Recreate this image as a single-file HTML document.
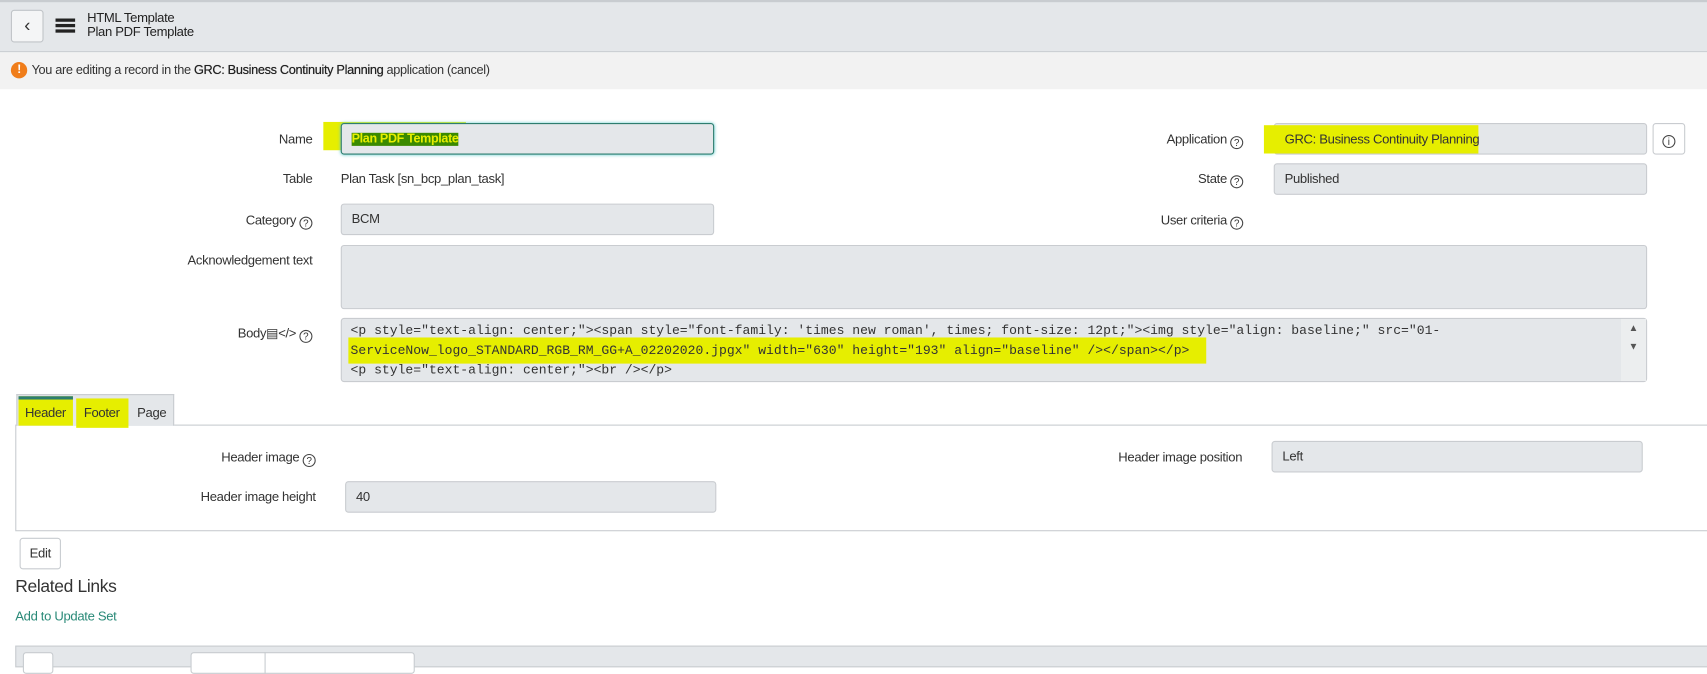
<!DOCTYPE html>
<html><head><style>
*{margin:0;padding:0;box-sizing:border-box}
body{width:1707px;height:658px;overflow:hidden;background:#fff;font-family:"Liberation Sans",sans-serif;font-size:12px;color:#333;position:relative;letter-spacing:-0.3px}
#w{position:absolute;left:0;top:0;width:1568px;height:605px;transform:scale(1.08865);transform-origin:0 0}
.a{position:absolute;white-space:nowrap}
.f{position:absolute;background:#e4e7ea;border:1px solid #c9ccd0;border-radius:3px;padding:0 9px;line-height:26px;color:#333}
.l{position:absolute;text-align:right;white-space:nowrap}
.q{display:inline-block;width:12px;height:12px;border:1px solid #444;border-radius:50%;font-size:9px;line-height:10px;text-align:center;margin-left:3px;vertical-align:-2px;letter-spacing:0}
.hl{background:#e6ee00}
</style></head><body><div id="w">
<div class="a" style="left:0;top:0;width:1568px;height:48px;background:#e4e7ea;border-top:2px solid #c8ccd0;border-bottom:1px solid #c8ccd0"></div>
<div class="a" style="left:10px;top:9px;width:30px;height:30px;background:#f4f5f6;border:1px solid #c0c4c8;border-radius:3px;text-align:center;line-height:27px;font-size:17px">&#8249;</div>
<div class="a" style="left:51px;top:17px;width:18px;height:3px;background:#222;box-shadow:0 5px 0 #222,0 10px 0 #222"></div>
<div class="a" style="left:80px;top:10px;font-size:12px;line-height:13px;color:#222">HTML Template<br>Plan PDF Template</div>
<div class="a" style="left:0;top:48px;width:1568px;height:34px;background:#f2f2f2"></div>
<div class="a" style="left:10px;top:57px;width:15px;height:15px;border-radius:50%;background:#f07d1a;color:#fff;font-weight:bold;text-align:center;line-height:15px;font-size:11px">!</div>
<div class="a" style="left:29px;top:58px;font-size:11.7px;color:#333">You are editing a record in the <b style="font-weight:normal;color:#222;text-shadow:0 0 0.4px #222">GRC: Business Continuity Planning</b> application (cancel)</div>

<div class="l" style="right:1281px;top:121px">Name</div>
<div class="a hl" style="left:297px;top:112px;width:131px;height:26px"></div>
<div class="f" style="left:313px;top:113px;width:343px;height:29px;border-color:#2e7d6f;box-shadow:0 0 3px #6cc"><span style="background:#3a8a00;color:#e6ee00;font-weight:bold;font-size:11.5px">Plan PDF Template</span></div>
<div class="l" style="right:1281px;top:157px">Table</div>
<div class="a" style="left:313px;top:157px">Plan Task [sn_bcp_plan_task]</div>
<div class="l" style="right:1281px;top:195px">Category<span class="q">?</span></div>
<div class="f" style="left:313px;top:187px;width:343px;height:29px">BCM</div>
<div class="l" style="right:1281px;top:232px">Acknowledgement text</div>
<div class="f" style="left:313px;top:225px;width:1200px;height:59px"></div>
<div class="l" style="right:1281px;top:299px">Body&#9636;&lt;/&gt;<span class="q">?</span></div>
<div class="f" style="left:313px;top:292px;width:1200px;height:59px;padding:0"></div>
<div class="a" style="left:320px;top:310px;width:788px;height:24px;background:#e6ee00"></div>
<div class="a" style="left:322px;top:295px;font-family:'Liberation Mono',monospace;font-size:12px;line-height:18px;letter-spacing:0;color:#333">&lt;p style="text-align: center;"&gt;&lt;span style="font-family: 'times new roman', times; font-size: 12pt;"&gt;&lt;img style="align: baseline;" src="01-<br>ServiceNow_logo_STANDARD_RGB_RM_GG+A_02202020.jpgx" width="630" height="193" align="baseline" /&gt;&lt;/span&gt;&lt;/p&gt;<br>&lt;p style="text-align: center;"&gt;&lt;br /&gt;&lt;/p&gt;</div>
<div class="a" style="left:1489px;top:293px;width:23px;height:57px;background:#eceeef;color:#555;font-size:9px;text-align:center;line-height:17px;letter-spacing:0">&#9650;<br>&#9660;</div>

<div class="l" style="right:426px;top:121px">Application<span class="q">?</span></div>
<div class="f" style="left:1170px;top:113px;width:343px;height:29px"></div>
<div class="a hl" style="left:1161px;top:115px;width:197px;height:26px"></div>
<div class="a" style="left:1180px;top:121px">GRC: Business Continuity Planning</div>
<div class="a" style="left:1518px;top:113px;width:30px;height:29px;border:1px solid #c9ccd0;border-radius:3px;text-align:center;line-height:27px"><span class="q" style="margin:0">i</span></div>
<div class="l" style="right:426px;top:157px">State<span class="q">?</span></div>
<div class="f" style="left:1170px;top:150px;width:343px;height:29px">Published</div>
<div class="l" style="right:426px;top:195px">User criteria<span class="q">?</span></div>

<div class="a" style="left:14px;top:390px;width:1560px;height:98px;border:1px solid #c8ccd0"></div>
<div class="a" style="left:15px;top:362px;width:145px;height:29px;background:#e4e7ea;border:1px solid #c8ccd0;border-bottom:none"></div>
<div class="a hl" style="left:17px;top:364px;width:50px;height:27px;border-top:3px solid #2e7d6f;background:#e6ee00"></div>
<div class="a hl" style="left:70px;top:366px;width:48px;height:27px"></div>
<div class="a" style="left:23px;top:372px;font-size:12px">Header</div>
<div class="a" style="left:77px;top:372px;font-size:12px">Footer</div>
<div class="a" style="left:126px;top:372px;font-size:12px">Page</div>
<div class="l" style="right:1278px;top:413px">Header image<span class="q">?</span></div>
<div class="l" style="right:1278px;top:449px">Header image height</div>
<div class="f" style="left:317px;top:442px;width:341px;height:29px">40</div>
<div class="l" style="right:427px;top:413px">Header image position</div>
<div class="f" style="left:1168px;top:405px;width:341px;height:29px">Left</div>
<div class="a" style="left:18px;top:494px;width:38px;height:29px;border:1px solid #c8ccd0;border-radius:3px;text-align:center;line-height:27px">Edit</div>
<div class="a" style="left:14px;top:531px;font-size:16px;color:#333">Related Links</div>
<div class="a" style="left:14px;top:559px;font-size:12px;color:#2a8a78">Add to Update Set</div>
<div class="a" style="left:14px;top:593px;width:1560px;height:20px;background:#e4e7ea;border:1px solid #c8ccd0"></div>
<div class="a" style="left:21px;top:599px;width:28px;height:20px;background:#fff;border:1px solid #c8ccd0;border-radius:3px"></div>
<div class="a" style="left:175px;top:599px;width:206px;height:20px;background:#fff;border:1px solid #c8ccd0;border-radius:3px"></div>
<div class="a" style="left:243px;top:599px;width:1px;height:20px;background:#c8ccd0"></div>
</div></body></html>
